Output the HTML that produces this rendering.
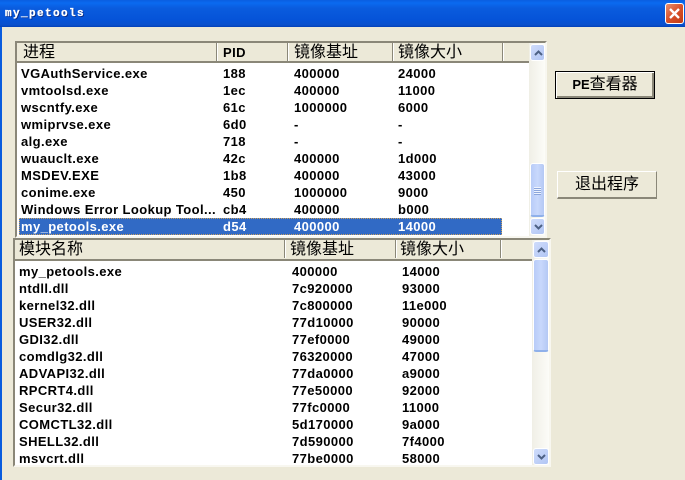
<!DOCTYPE html>
<html><head><meta charset="utf-8">
<style>
html,body{margin:0;padding:0;background:#ECE9D8}
#w{position:relative;width:685px;height:480px;overflow:hidden;background:#ECE9D8;font-family:"Liberation Sans","WenQuanYi Zen Hei",sans-serif}
#w div{position:absolute;box-sizing:border-box}
#tb{left:0;top:0;width:685px;height:27px;background:linear-gradient(#0A5EE0 0,#0A6AF0 3px,#0A5CDE 8px,#0553D8 20px,#0A50CC 25px,#0340B8 27px)}
#tt{left:5px;top:6px;color:#fff;font:bold 11px/16px "Liberation Mono",monospace;text-shadow:1px 1px 0 #0A2A80;letter-spacing:1.4px;-webkit-text-stroke:.3px #fff}
#cl{left:665px;top:3px;width:19px;height:21px;border:1px solid #fff;border-radius:3px;background:linear-gradient(135deg,#E89070,#D8502A 50%,#C03A14)}
#lb{left:0;top:27px;width:2px;height:453px;background:#0A5CDE}
.l{background:#fff;border-left:2px solid #8A8778;border-top:2px solid #8A8778;border-right:2px solid #F8F7F0;border-bottom:2px solid #F8F7F0}
.h{background:#ECE9D8;border-bottom:2px solid #8A8778}
.s{top:0;height:18px;width:2px;background:linear-gradient(90deg,#8A8778 50%,#fff 50%)}
.c{top:0;font-size:16px;line-height:19px;color:#000;white-space:nowrap}
.r{left:0;height:17px;font:bold 13px/17px "Liberation Sans",sans-serif;color:#000;white-space:nowrap;letter-spacing:.4px}
.r span{position:absolute;top:0}
.sel{background:#316AC5;color:#fff;outline:1px dotted #C8A060;outline-offset:-1px}
.sb{background:linear-gradient(90deg,#F0EFE6,#FCFCF8)}
.bt{background:linear-gradient(135deg,#CFDCFB,#B2C6F4);border:1px solid #fff;border-radius:3px}
.th{background:linear-gradient(90deg,#B8CCF8,#C8D8FC 50%,#B4C8F4);border:1px solid #fff;border-bottom:2px solid #8FB0EA;border-radius:3px}
.btn{font-size:16px;color:#000;text-align:center;background:#ECE9D8}
</style></head><body>
<div id="w">
<div id="tb"></div>
<div id="tt">my_petools</div>
<div id="cl"><svg width="17" height="19" style="position:absolute;left:0;top:0"><path d="M4 5L13 14M13 5L4 14" stroke="#fff" stroke-width="2.4" fill="none"/></svg></div>
<div id="lb"></div>

<div class="l" style="left:15px;top:41px;width:532px;height:197px">
 <div class="h" style="left:0;top:0;width:512px;height:20px;">
  <div class="c" style="left:6px;">进程</div>
  <div class="s" style="left:199px"></div>
  <div class="c" style="left:206px;font:bold 13px/19px 'Liberation Sans',sans-serif;letter-spacing:.4px">PID</div>
  <div class="s" style="left:270px"></div>
  <div class="c" style="left:277px">镜像基址</div>
  <div class="s" style="left:375px"></div>
  <div class="c" style="left:381px">镜像大小</div>
  <div class="s" style="left:485px"></div>
 </div>
 <div class="r" style="top:22px;width:512px"><span style="left:4px">VGAuthService.exe</span><span style="left:206px">188</span><span style="left:277px">400000</span><span style="left:381px">24000</span></div>
 <div class="r" style="top:39px;width:512px"><span style="left:4px">vmtoolsd.exe</span><span style="left:206px">1ec</span><span style="left:277px">400000</span><span style="left:381px">11000</span></div>
 <div class="r" style="top:56px;width:512px"><span style="left:4px">wscntfy.exe</span><span style="left:206px">61c</span><span style="left:277px">1000000</span><span style="left:381px">6000</span></div>
 <div class="r" style="top:73px;width:512px"><span style="left:4px">wmiprvse.exe</span><span style="left:206px">6d0</span><span style="left:277px">-</span><span style="left:381px">-</span></div>
 <div class="r" style="top:90px;width:512px"><span style="left:4px">alg.exe</span><span style="left:206px">718</span><span style="left:277px">-</span><span style="left:381px">-</span></div>
 <div class="r" style="top:107px;width:512px"><span style="left:4px">wuauclt.exe</span><span style="left:206px">42c</span><span style="left:277px">400000</span><span style="left:381px">1d000</span></div>
 <div class="r" style="top:124px;width:512px"><span style="left:4px">MSDEV.EXE</span><span style="left:206px">1b8</span><span style="left:277px">400000</span><span style="left:381px">43000</span></div>
 <div class="r" style="top:141px;width:512px"><span style="left:4px">conime.exe</span><span style="left:206px">450</span><span style="left:277px">1000000</span><span style="left:381px">9000</span></div>
 <div class="r" style="top:158px;width:512px"><span style="left:4px">Windows Error Lookup Tool...</span><span style="left:206px">cb4</span><span style="left:277px">400000</span><span style="left:381px">b000</span></div>
 <div class="r sel" style="top:175px;left:2px;width:483px"><span style="left:2px">my_petools.exe</span><span style="left:204px">d54</span><span style="left:275px">400000</span><span style="left:379px">14000</span></div>
 <div class="sb" style="left:512px;top:0;width:16px;height:193px"></div>
 <div class="bt" style="left:513px;top:1px;width:15px;height:17px"><svg style="position:absolute;left:3px;top:5px" width="9" height="6"><path d="M1 5L4.500 1.500L8 5" stroke="#4D6185" stroke-width="2" fill="none"/></svg></div>
 <div class="th" style="left:513px;top:120px;width:15px;height:54px"><div style="left:3px;top:23px;width:7px;height:8px;background:repeating-linear-gradient(#EEF3FE 0,#EEF3FE 1px,#8CA6DC 1px,#8CA6DC 2px)"></div></div>
 <div class="bt" style="left:513px;top:175px;width:15px;height:17px"><svg style="position:absolute;left:3px;top:5px" width="9" height="6"><path d="M1 1L4.500 4.500L8 1" stroke="#4D6185" stroke-width="2" fill="none"/></svg></div>
</div>

<div class="l" style="left:13px;top:238px;width:538px;height:229px">
 <div class="h" style="left:0;top:0;width:517px;height:21px;">
  <div class="c" style="left:4px;">模块名称</div>
  <div class="s" style="left:269px"></div>
  <div class="c" style="left:275px">镜像基址</div>
  <div class="s" style="left:380px"></div>
  <div class="c" style="left:385px">镜像大小</div>
  <div class="s" style="left:485px"></div>
 </div>
 <div class="r" style="top:23px;width:517px"><span style="left:4px">my_petools.exe</span><span style="left:277px">400000</span><span style="left:387px">14000</span></div>
 <div class="r" style="top:40px;width:517px"><span style="left:4px">ntdll.dll</span><span style="left:277px">7c920000</span><span style="left:387px">93000</span></div>
 <div class="r" style="top:57px;width:517px"><span style="left:4px">kernel32.dll</span><span style="left:277px">7c800000</span><span style="left:387px">11e000</span></div>
 <div class="r" style="top:74px;width:517px"><span style="left:4px">USER32.dll</span><span style="left:277px">77d10000</span><span style="left:387px">90000</span></div>
 <div class="r" style="top:91px;width:517px"><span style="left:4px">GDI32.dll</span><span style="left:277px">77ef0000</span><span style="left:387px">49000</span></div>
 <div class="r" style="top:108px;width:517px"><span style="left:4px">comdlg32.dll</span><span style="left:277px">76320000</span><span style="left:387px">47000</span></div>
 <div class="r" style="top:125px;width:517px"><span style="left:4px">ADVAPI32.dll</span><span style="left:277px">77da0000</span><span style="left:387px">a9000</span></div>
 <div class="r" style="top:142px;width:517px"><span style="left:4px">RPCRT4.dll</span><span style="left:277px">77e50000</span><span style="left:387px">92000</span></div>
 <div class="r" style="top:159px;width:517px"><span style="left:4px">Secur32.dll</span><span style="left:277px">77fc0000</span><span style="left:387px">11000</span></div>
 <div class="r" style="top:176px;width:517px"><span style="left:4px">COMCTL32.dll</span><span style="left:277px">5d170000</span><span style="left:387px">9a000</span></div>
 <div class="r" style="top:193px;width:517px"><span style="left:4px">SHELL32.dll</span><span style="left:277px">7d590000</span><span style="left:387px">7f4000</span></div>
 <div class="r" style="top:210px;width:517px"><span style="left:4px">msvcrt.dll</span><span style="left:277px">77be0000</span><span style="left:387px">58000</span></div>
 <div class="sb" style="left:517px;top:0;width:17px;height:225px"></div>
 <div class="bt" style="left:518px;top:1px;width:16px;height:17px"><svg style="position:absolute;left:3px;top:5px" width="9" height="6"><path d="M1 5L4.500 1.500L8 5" stroke="#4D6185" stroke-width="2" fill="none"/></svg></div>
 <div class="th" style="left:518px;top:19px;width:16px;height:93px"></div>
 <div class="bt" style="left:518px;top:208px;width:16px;height:17px"><svg style="position:absolute;left:3px;top:5px" width="9" height="6"><path d="M1 1L4.500 4.500L8 1" stroke="#4D6185" stroke-width="2" fill="none"/></svg></div>
</div>

<div class="btn" style="left:555px;top:71px;width:100px;height:28px;border:1px solid #000;box-shadow:inset 1px 1px 0 #fff,inset -2px -2px 0 #8A8778;line-height:25px;"><span style="font-weight:bold;font-size:13px">PE</span>查看器</div>
<div class="btn" style="left:557px;top:171px;width:100px;height:28px;border-top:1px solid #fff;border-left:1px solid #fff;border-bottom:2px solid #8A8778;border-right:1px solid #8A8778;line-height:26px;">退出程序</div>
</div>
</body></html>
